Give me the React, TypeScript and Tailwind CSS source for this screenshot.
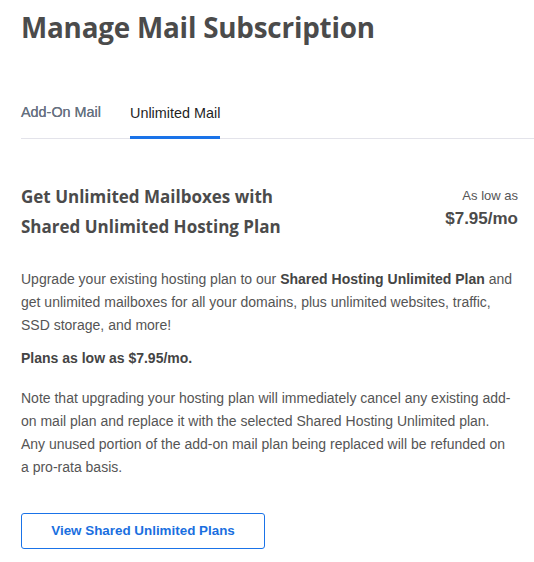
import React from "react";

export default function App() {
  return (
    <div className="min-h-[562px] w-[534px] bg-white pl-[21px] text-[#4a4a4a]">
      <h1 className="pt-[8px] font-['Open_Sans',sans-serif] text-[27.8px] font-bold leading-[38px] tracking-[-0.2px] text-[#4b4b4b]">
        Manage Mail Subscription
      </h1>

      <div className="mt-[56px] flex gap-[29px] border-b border-[#e3e3ea] font-['Liberation_Sans',sans-serif] text-[14.4px]">
        <button className="pb-[16px] leading-[20px] text-[#66717f] [text-shadow:0_0_0.3px_#66717f]">Add-On Mail</button>
        <button className="-mb-px border-b-[3px] border-[#1a73e8] pb-[13px] leading-[20px] text-[#1f1f1f]">
          Unlimited Mail
        </button>
      </div>

      <div className="pr-[16px] pt-[43px] font-['Liberation_Sans',sans-serif]">
        <div className="flex items-start justify-between">
          <h2 className="font-['Open_Sans',sans-serif] text-[17px] font-bold leading-[30px] text-[#4b4b4b]">
            Get Unlimited Mailboxes with
            <br />
            Shared Unlimited Hosting Plan
          </h2>
          <div className="pt-[5px] text-right">
            <div className="text-[13px] leading-[18px] text-[#555]">As low as</div>
            <div className="mt-[1px] text-[17px] font-bold leading-[26px] text-[#4b4b4b]">$7.95/mo</div>
          </div>
        </div>

        <p className="mt-[26px] text-[14px] leading-[23px] text-[#555]">
          Upgrade your existing hosting plan to our <b className="text-[#444]">Shared Hosting Unlimited Plan</b> and
          get unlimited mailboxes for all your domains, plus unlimited websites, traffic, SSD storage, and more!
        </p>

        <p className="mt-[10px] text-[14px] font-bold leading-[23px] text-[#444]">Plans as low as $7.95/mo.</p>

        <p className="mt-[17px] text-[14px] leading-[23px] text-[#555]">
          Note that upgrading your hosting plan will immediately cancel any existing add-
          <br />
          on mail plan and replace it with the selected Shared Hosting Unlimited plan.
          <br />
          Any unused portion of the add-on mail plan being replaced will be refunded on
          <br />
          a pro-rata basis.
        </p>

        <button className="mt-[34px] flex h-[36px] w-[244px] items-center justify-center rounded-[3px] border border-[#1a73e8] text-[13.4px] font-bold text-[#1a6fe0]">
          View Shared Unlimited Plans
        </button>
      </div>
    </div>
  );
}
